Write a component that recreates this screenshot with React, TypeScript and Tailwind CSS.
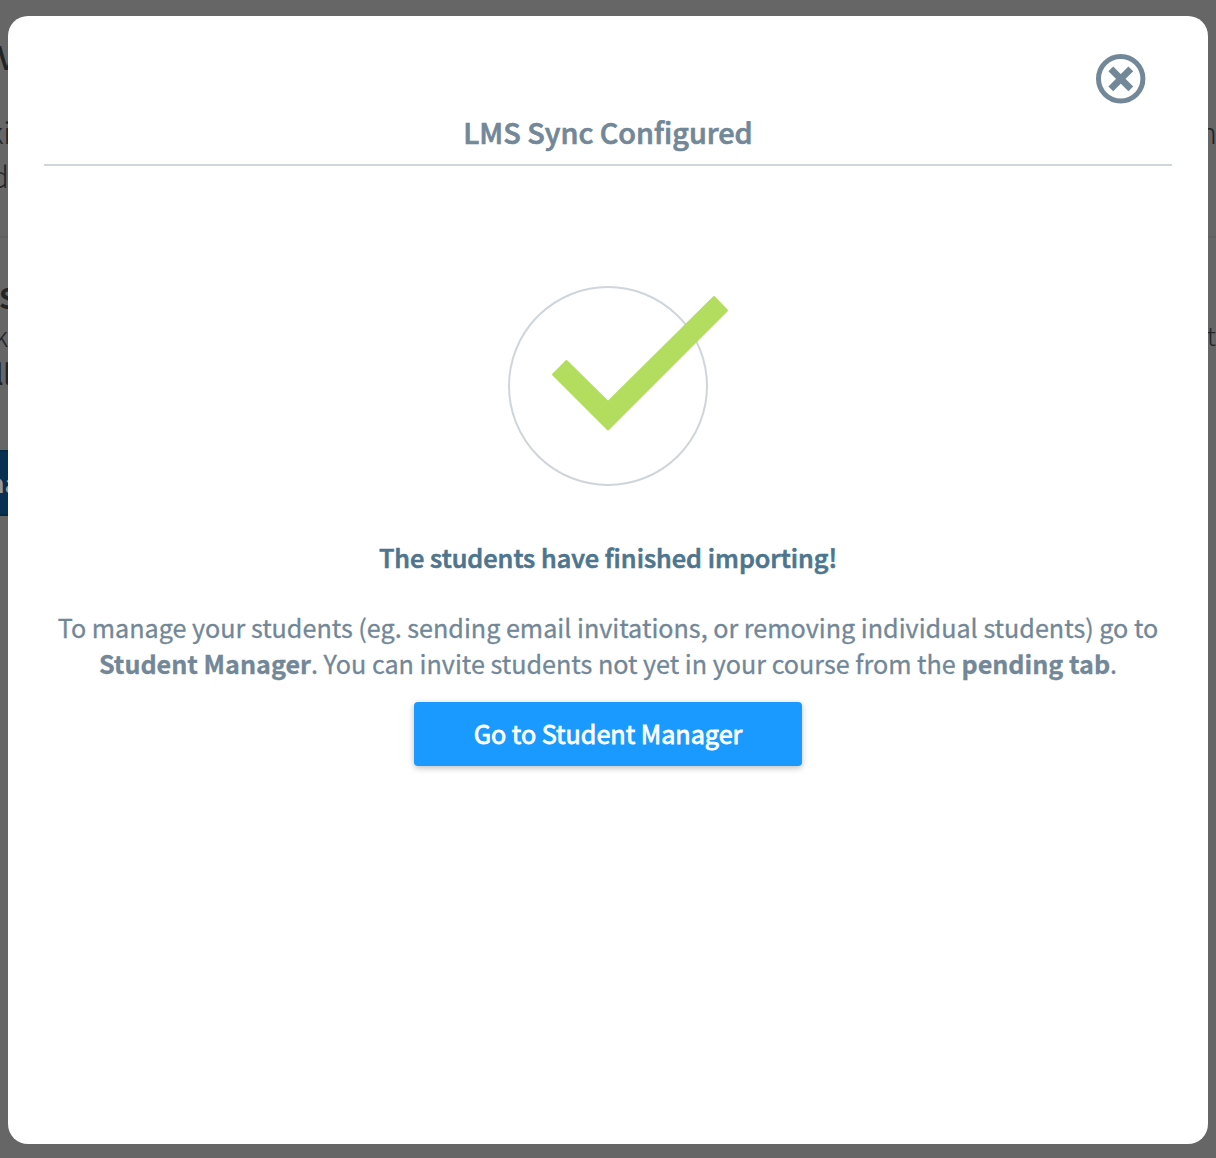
import React from 'react';

function CloseIcon() {
  return (
    <svg width="50" height="50" viewBox="0 0 50 50" fill="none" stroke="#728797">
      <circle cx="24.7" cy="24.7" r="22.2" strokeWidth="5" />
      <path d="M14.8 14.8L34.8 34.8M34.8 14.8L14.8 34.8" strokeWidth="6.8" />
    </svg>
  );
}

function SuccessIcon() {
  return (
    <svg width="224" height="200" viewBox="0 0 224 200" className="ml-6" fill="none">
      <circle cx="100" cy="100" r="99" stroke="#ced5db" strokeWidth="2" />
      <path
        d="M45 88.5L58.5 75L100 116L206 11L219 24.5L100 143.5Z"
        fill="#b2dd5f"
        stroke="#b2dd5f"
        strokeWidth="2"
        strokeLinejoin="round"
      />
    </svg>
  );
}

function PageLeftEdge() {
  return (
    <div className="flex w-2 shrink-0 flex-col overflow-hidden whitespace-nowrap text-[#222426]">
      <div className="mt-8 -ml-[3px] h-[77px] text-[33px] leading-[48px] font-medium">V</div>
      <div className="flex h-11 justify-end text-[30px] leading-[44px] font-light">
        <span className="-mr-[3px]">ki</span>
      </div>
      <div className="flex h-[85px] justify-end border-b-2 border-[#606060] text-[30px] leading-[44px] font-light">
        <span className="-mr-px">d</span>
      </div>
      <div className="mt-[39px] -ml-px h-10 text-[28px] leading-10 font-bold">S</div>
      <div className="flex h-[38px] justify-end text-[27px] leading-[38px] font-light">k</div>
      <div className="-ml-[5px] h-[95px] text-[28px] leading-[36px] font-medium">ll</div>
      <div className="flex h-[66px] shrink-0 items-center border-y-2 border-[#052a47] bg-[#083051] text-[25px] font-medium text-[#999]">
        <span className="-ml-[11px]">na</span>
      </div>
    </div>
  );
}

function PageRightEdge() {
  return (
    <div className="flex w-2 shrink-0 flex-col overflow-hidden whitespace-nowrap text-[#222426]">
      <div className="mt-[109px] flex h-[129px] justify-end border-b-2 border-[#606060] text-[30px] leading-[44px] font-light">
        <span className="-mr-px">n</span>
      </div>
      <div className="mt-[78px] flex justify-end text-[26px] leading-[38px] font-light">
        <span>t</span>
      </div>
    </div>
  );
}

export default function App() {
  return (
    <div className="flex h-[1158px] w-[1216px] overflow-hidden bg-[#666] font-['Noto_Sans_CJK_SC','Noto_Sans',sans-serif]">
      <PageLeftEdge />

      <div
        role="dialog"
        className="mt-4 flex h-[1128px] w-[1200px] flex-col rounded-[20px] bg-white px-9 text-[#728797]"
      >
        <div className="flex justify-end pt-[38px] pr-[26px]">
          <button type="button" aria-label="Close" className="h-[50px] w-[50px]">
            <CloseIcon />
          </button>
        </div>

        <h1 className="h-[62px] border-b-2 border-[#ced5db] text-center text-[28.8px] leading-[56px] font-medium [-webkit-text-stroke:0.7px_#728797]">
          LMS Sync Configured
        </h1>

        <div className="mt-[120px] flex flex-col items-center">
          <SuccessIcon />

          <h2 className="mt-[51px] text-[25.3px] leading-10 font-medium whitespace-nowrap text-[#4d758e] [-webkit-text-stroke:0.7px_#4d758e]">
            The students have finished importing!
          </h2>

          <p className="mt-8 text-center text-[25.15px] leading-9 whitespace-nowrap [-webkit-text-stroke:0.3px_#728797]">
            To manage your students (eg. sending email invitations, or removing individual students) go to
            <br />
            <strong>Student Manager</strong>. You can invite students not yet in your course from the{' '}
            <strong>pending tab</strong>.
          </p>

          <button
            type="button"
            className="mt-[21px] h-16 w-[388px] rounded-[4px] bg-[#1a9aff] text-[25.15px] font-normal text-white shadow-[0_2px_6px_rgba(0,0,0,0.26)] [-webkit-text-stroke:0.8px_white]"
          >
            Go to Student Manager
          </button>
        </div>
      </div>

      <PageRightEdge />
    </div>
  );
}
